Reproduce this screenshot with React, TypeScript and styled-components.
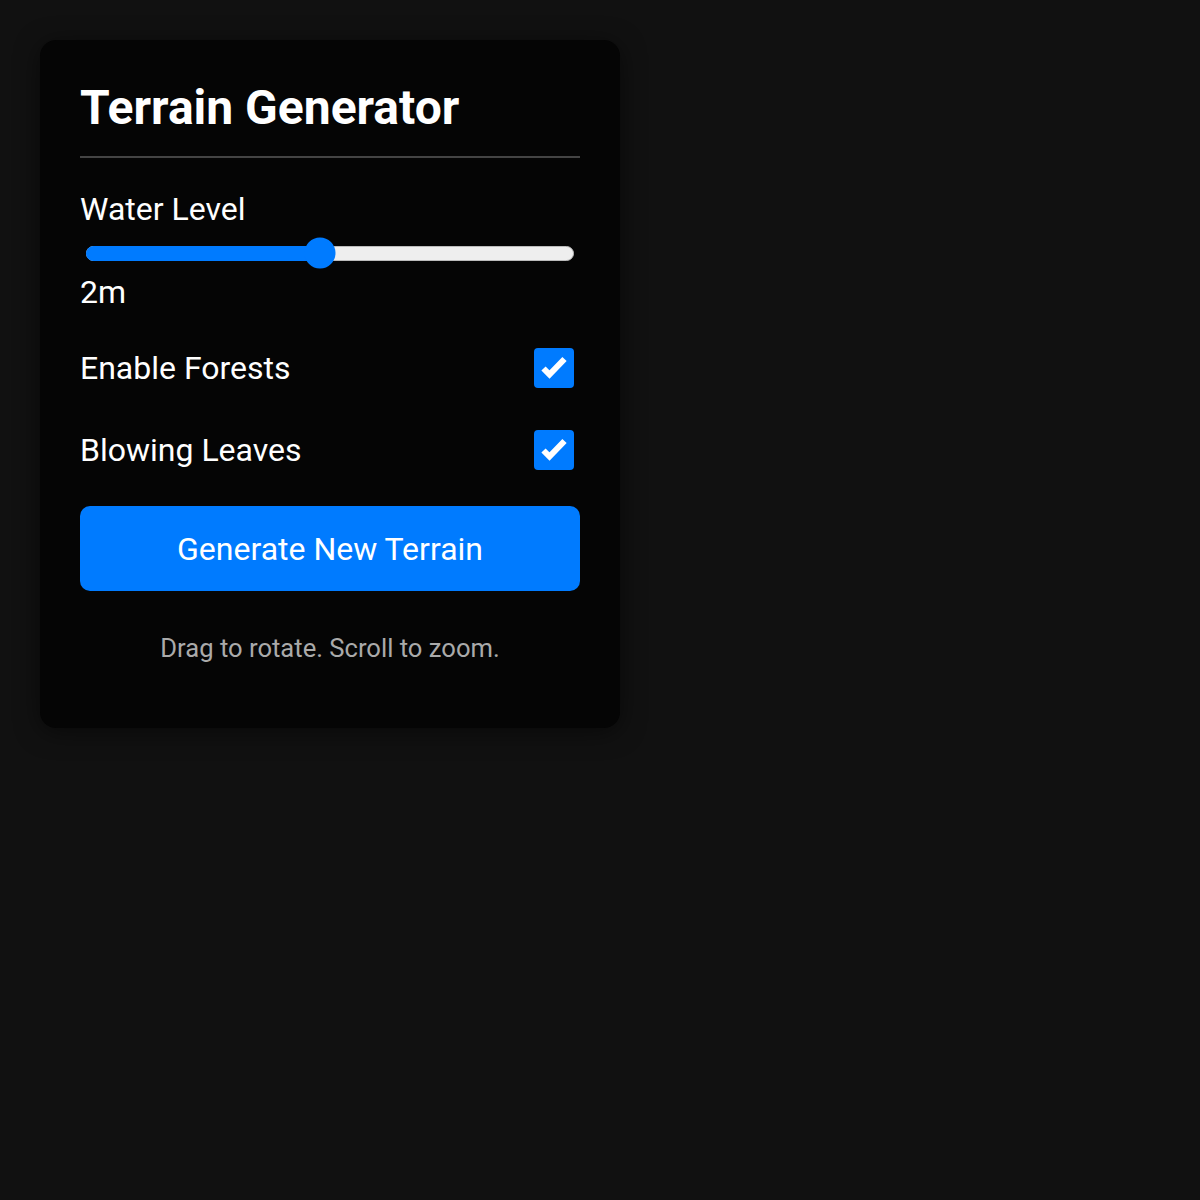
import { FC, useState } from 'react';
import styled, { createGlobalStyle } from 'styled-components';

const GlobalStyle = createGlobalStyle`
	html, body {
		margin: 0;
		padding: 0;
		background: #111111;
		font-family: Roboto, 'Liberation Sans', sans-serif;
		color: #ffffff;
	}
	#root {
		min-height: 1200px;
	}
`;

type SliderProps = {
	min: number;
	max: number;
	value: number;
};

const Slider: FC<SliderProps> = ({ min, max, value }) => {
	const pct = ((value - min) / (max - min)) * 100;
	return (
		<SliderContainer>
			<SliderTrack>
				<SliderFill style={{ width: `${pct}%` }} />
				<SliderThumb style={{ left: `${pct}%` }} />
			</SliderTrack>
		</SliderContainer>
	);
};

const Checkbox: FC<{ checked: boolean; onToggle: () => void }> = ({ checked, onToggle }) => (
	<CheckBox $checked={checked} onClick={onToggle}>
		{checked && (
			<svg width="40" height="40" viewBox="0 0 40 40">
				<path
					d="M9.5 20.5 L15.5 26.5 L30.5 11"
					fill="none"
					stroke="#ffffff"
					strokeWidth="6"
					strokeLinecap="butt"
					strokeLinejoin="miter"
				/>
			</svg>
		)}
	</CheckBox>
);

const App: FC = () => {
	const [forests, setForests] = useState(true);
	const [leaves, setLeaves] = useState(true);

	return (
		<>
			<GlobalStyle />
			<Page>
				<Panel>
					<Header>
						<Title>Terrain Generator</Title>
					</Header>
					<Section>
						<Label>Water Level</Label>
						<Slider min={-2.5} max={6} value={1.58} />
						<Value>2m</Value>
					</Section>
					<ToggleList>
						<ToggleRow>
							<Label>Enable Forests</Label>
							<Checkbox checked={forests} onToggle={() => setForests(!forests)} />
						</ToggleRow>
						<ToggleRow>
							<Label>Blowing Leaves</Label>
							<Checkbox checked={leaves} onToggle={() => setLeaves(!leaves)} />
						</ToggleRow>
					</ToggleList>
					<GenerateButton>Generate New Terrain</GenerateButton>
					<Hint>Drag to rotate. Scroll to zoom.</Hint>
				</Panel>
			</Page>
		</>
	);
};

export default App;

const Page = styled.div`
	padding: 40px;
`;

const Panel = styled.div`
	box-sizing: border-box;
	width: 580px;
	padding: 40px 40px 65px;
	background: #050505;
	border-radius: 16px;
	box-shadow: 0 4px 24px rgba(0, 0, 0, 0.5);
	display: flex;
	flex-direction: column;
`;

const Header = styled.div`
	padding-bottom: 20px;
	border-bottom: 2px solid #444444;
`;

const Title = styled.h1`
	margin: -1px 0 0;
	font-size: 48px;
	font-weight: 700;
	line-height: normal;
`;

const Section = styled.div`
	margin-top: 32px;
	display: flex;
	flex-direction: column;
`;

const Label = styled.div`
	font-size: 32px;
	line-height: normal;
`;

const SliderContainer = styled.div`
	height: 30px;
	margin: 10px 6px 5px;
	display: flex;
	align-items: center;
`;

const SliderTrack = styled.div`
	position: relative;
	flex: 1;
	height: 15px;
	box-sizing: border-box;
	border-radius: 8px;
	background: #eeeeee;
	border: 1px solid #bbbbbb;
`;

const SliderFill = styled.div`
	height: 100%;
	margin: -1px 0 0 -1px;
	padding: 1px 0;
	border-radius: 8px;
	background: #007bff;
`;

const SliderThumb = styled.div`
	position: absolute;
	top: 50%;
	width: 31px;
	height: 31px;
	border-radius: 50%;
	background: #007bff;
	transform: translate(-50%, -50%);
`;

const Value = styled.div`
	font-size: 32px;
	line-height: normal;
`;

const ToggleList = styled.div`
	margin-top: 37px;
	display: flex;
	flex-direction: column;
	gap: 42px;
`;

const ToggleRow = styled.div`
	display: flex;
	justify-content: space-between;
	align-items: center;
	height: 40px;
	padding-right: 6px;
`;

const CheckBox = styled.div<{ $checked: boolean }>`
	width: 40px;
	height: 40px;
	border-radius: 4px;
	box-sizing: border-box;
	background: ${({ $checked }) => ($checked ? '#007bff' : '#ffffff')};
	border: ${({ $checked }) => ($checked ? 'none' : '2px solid #767676')};
	display: flex;
	align-items: center;
	justify-content: center;
	cursor: pointer;
`;

const GenerateButton = styled.button`
	margin-top: 36px;
	height: 85px;
	border: none;
	border-radius: 10px;
	background: #007bff;
	color: #ffffff;
	font-family: Roboto, 'Liberation Sans', sans-serif;
	font-size: 32px;
	cursor: pointer;
`;

const Hint = styled.p`
	margin: 42px 0 0;
	text-align: center;
	font-size: 25.6px;
	color: #aaaaaa;
`;
